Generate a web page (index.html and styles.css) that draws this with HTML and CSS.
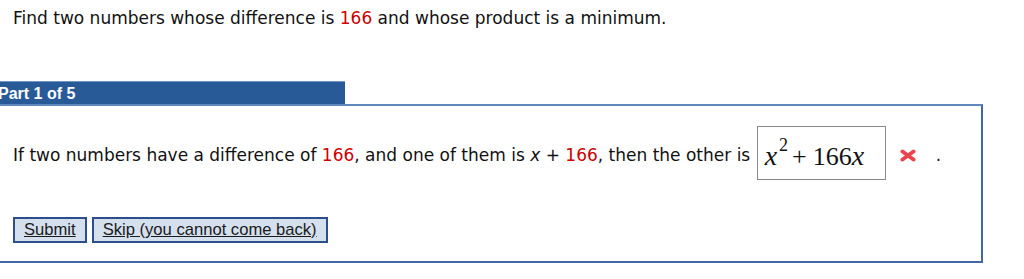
FILE: index.html
```html
<!DOCTYPE html>
<html>
<head>
<meta charset="utf-8">
<link rel="stylesheet" href="styles.css">
</head>
<body>
<div class="question">Find two numbers whose difference is <span class="num">166</span> and whose product is a minimum.</div>
<div class="part">
  <div class="tab">Part 1 of 5</div>
  <div class="box">
    <div class="line">If two numbers have a difference of <span class="num">166</span>, and one of them is <i>x</i> + <span class="num">166</span>, then the other is <span class="answer"><i>x</i><sup>2</sup><span class="op">+</span>166<i>x</i></span><svg class="wrong" width="18" height="13" viewBox="0 0 18 13"><path d="M3.5 2.5 L14.5 10.5 M14.5 2.5 L3.5 10.5" stroke="#e8434e" stroke-width="4" stroke-linecap="round"/></svg><span class="dot">.</span></div>
    <div class="buttons">
      <button class="btn">Submit</button>
      <button class="btn">Skip (you cannot come back)</button>
    </div>
  </div>
</div>
</body>
</html>
```
FILE: styles.css
```css
html, body {
  margin: 0;
  padding: 0;
  background: #fff;
}
body {
  font-family: "DejaVu Sans", Verdana, sans-serif;
  font-size: 17px;
  line-height: 20px;
  color: #111;
}
.num {
  color: #cc0000;
}
.question {
  margin: 8px 0 0 13px;
  height: 20px;
}
.part {
  margin: 53px 0 0 -6px;
  width: 989px;
}
.tab {
  width: 351px;
  height: 23px;
  box-sizing: border-box;
  background: #285a98;
  border-top: 1px solid #7296c4;
  color: #fff;
  font-family: "Liberation Sans", Arial, sans-serif;
  font-weight: bold;
  font-size: 16px;
  line-height: 22px;
  padding: 1px 0 0 4px;
}
.box {
  border: 2px solid #3f68a4;
  border-top-color: #6189c0;
  padding: 20px 0 18px 17px;
}
.line i {
  font-style: italic;
}
.answer {
  display: inline-block;
  box-sizing: border-box;
  width: 129px;
  height: 54px;
  border: 1px solid #8a8a8a;
  margin-left: 1px;
  padding: 16px 0 0 7px;
  font-family: "Liberation Serif", "Times New Roman", serif;
  font-size: 26px;
  line-height: 26px;
  color: #111;
  vertical-align: -4px;
}
.answer i {
  font-size: 28px;
}
.answer sup {
  font-size: 18px;
  line-height: 0;
  vertical-align: 14px;
  margin-left: 2px;
}
.answer .op {
  margin: 0 6px 0 4px;
}
.wrong {
  display: inline-block;
  vertical-align: -1px;
  margin-left: 13px;
}
.dot {
  margin-left: 19px;
}
.buttons {
  margin-top: 37px;
  display: flex;
  gap: 5px;
}
.btn {
  height: 26px;
  box-sizing: border-box;
  background: #d4e0ee;
  border: 2px solid #2c4f8b;
  border-radius: 0;
  padding: 0 9px;
  font-family: "Liberation Sans", Arial, sans-serif;
  font-size: 16.6px;
  line-height: 20px;
  color: #1a1a1a;
  text-decoration: underline;
  margin: 0;
}
```
